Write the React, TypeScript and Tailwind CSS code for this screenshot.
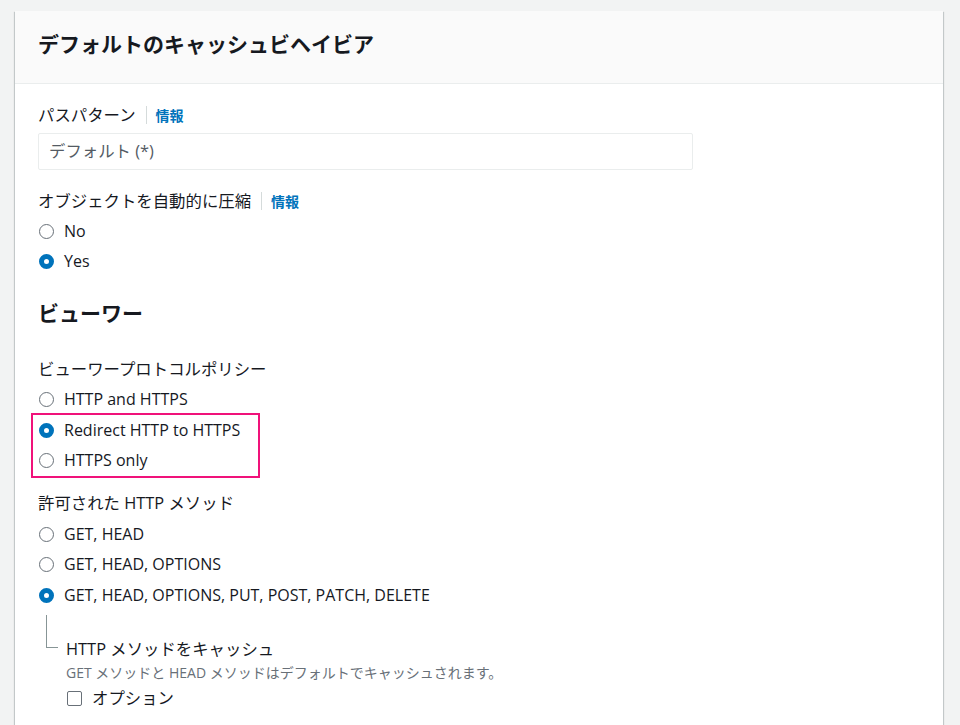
import React from "react";

const font = { fontFamily: '"Open Sans", "Noto Sans CJK JP", sans-serif' };

function Radio({ label, checked }: { label: string; checked?: boolean }) {
  return (
    <div className="flex items-center h-[30px]">
      {checked ? (
        <span className="ml-[1px] w-[15px] h-[15px] rounded-full border-[5px] border-[#0073bb] bg-white box-border" />
      ) : (
        <span className="ml-[1px] w-[15px] h-[15px] rounded-full border-[1.5px] border-[#687078] bg-white box-border" />
      )}
      <span className="ml-[10px] text-[16px] leading-[22px] text-[#16191f]">{label}</span>
    </div>
  );
}

function Label({ text, info }: { text: string; info?: boolean }) {
  return (
    <div className="flex items-center h-[22px]">
      <span className="text-[16.4px] leading-[22px] text-[#16191f]">{text}</span>
      {info && (
        <>
          <span className="ml-[10px] w-px h-[18px] bg-[#d5dbdb]" />
          <span className="ml-[9px] text-[14px] font-bold text-[#0073bb]">情報</span>
        </>
      )}
    </div>
  );
}

export default function App() {
  return (
    <div className="min-h-[725px] bg-[#f2f3f3] pt-[11px] pl-[15px] pr-[17px]" style={font}>
      <div className="bg-white shadow-[0_1px_1px_0_rgba(0,28,36,0.3),1px_1px_1px_0_rgba(0,28,36,0.15),-1px_1px_1px_0_rgba(0,28,36,0.15)] min-h-[714px]">
        <div className="h-[73px] bg-[#fafafa] border-b border-[#eaeded] pl-[23px] pt-[19px]">
          <h2 className="text-[21px] leading-[28px] font-bold text-[#16191f]">デフォルトのキャッシュビヘイビア</h2>
        </div>
        <div className="pl-[23px] pt-[20px]">
          <Label text="パスパターン" info />
          <div className="mt-[7px] w-[655px] h-[37px] border border-[#eaeded] rounded-[2px] flex items-center pl-[10px]">
            <span className="text-[16.4px] text-[#545b64]">デフォルト (*)</span>
          </div>
          <div className="mt-[20px]">
            <Label text="オブジェクトを自動的に圧縮" info />
          </div>
          <div className="mt-[4px]">
            <Radio label="No" />
            <Radio label="Yes" checked />
          </div>
          <h3 className="mt-[22px] text-[21px] leading-[30px] font-bold text-[#16191f]">ビューワー</h3>
          <div className="mt-[30px]">
            <Label text="ビューワープロトコルポリシー" />
          </div>
          <div className="mt-[4px] relative">
            <Radio label="HTTP and HTTPS" />
            <div className="h-[1px]" />
            <Radio label="Redirect HTTP to HTTPS" checked />
            <Radio label="HTTPS only" />
            <div className="absolute left-[-7px] top-[29px] w-[229px] h-[65px] border-2 border-[#f0127a]" />
          </div>
          <div className="mt-[17px]">
            <Label text="許可された HTTP メソッド" />
          </div>
          <div className="mt-[5px]">
            <Radio label="GET, HEAD" />
            <Radio label="GET, HEAD, OPTIONS" />
            <div className="h-[1px]" />
            <Radio label="GET, HEAD, OPTIONS, PUT, POST, PATCH, DELETE" checked />
          </div>
          <div className="flex">
            <div className="ml-[8px] mt-[5px] w-[12px] h-[33px] border-l border-b border-[#879596]" />
            <div className="ml-[8px] mt-[28px]">
              <div className="text-[16.4px] leading-[22px] text-[#16191f]">HTTP メソッドをキャッシュ</div>
              <div className="mt-[4px] text-[14px] leading-[18px] text-[#687078]">
                GET メソッドと HEAD メソッドはデフォルトでキャッシュされます。
              </div>
              <div className="mt-[5px] flex items-center h-[22px]">
                <span className="ml-[1px] w-[15px] h-[15px] rounded-[2px] border-[1.5px] border-[#687078] box-border" />
                <span className="ml-[10px] text-[16.4px] leading-[22px] text-[#16191f]">オプション</span>
              </div>
            </div>
          </div>
        </div>
      </div>
    </div>
  );
}
